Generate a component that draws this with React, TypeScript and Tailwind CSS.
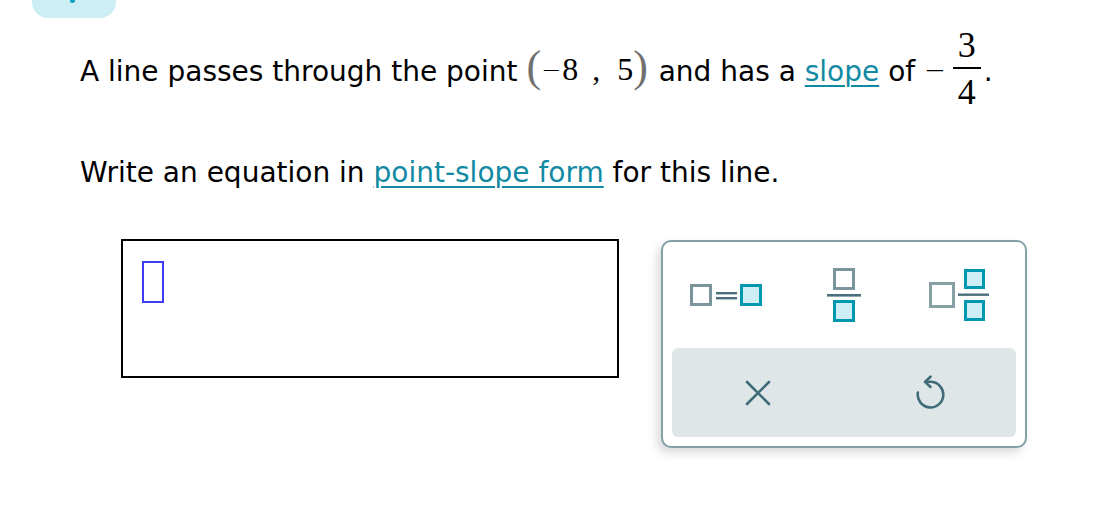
import React from "react";

const sans = "font-['DejaVu_Sans','Verdana',sans-serif]";
const serif = "font-['Liberation_Serif','Times_New_Roman',serif]";

function EqualsIcon() {
  return (
    <svg width="72" height="22" viewBox="0 0 72 22">
      <rect x="1.5" y="1.5" width="19" height="19" fill="#fff" stroke="#7a959b" strokeWidth="3" />
      <rect x="26" y="8" width="21" height="2.4" fill="#4a6e7a" />
      <rect x="26" y="13" width="21" height="2.4" fill="#4a6e7a" />
      <rect x="51.5" y="1.5" width="19" height="19" fill="#cdeef4" stroke="#0098b1" strokeWidth="3" />
    </svg>
  );
}

function FractionIcon() {
  return (
    <svg width="34" height="55" viewBox="0 0 34 55">
      <rect x="7.5" y="1.5" width="19" height="19" fill="#fff" stroke="#7a959b" strokeWidth="3" />
      <rect x="0" y="26" width="34" height="2.6" fill="#4a6e7a" />
      <rect x="7.5" y="33.5" width="19" height="19" fill="#cdeef4" stroke="#0098b1" strokeWidth="3" />
    </svg>
  );
}

function MixedIcon() {
  return (
    <svg width="60" height="52" viewBox="0 0 60 52">
      <rect x="1.5" y="14.5" width="23" height="23" fill="#fff" stroke="#87a0a6" strokeWidth="3" />
      <rect x="29" y="24.5" width="31" height="2.4" fill="#4a6e7a" />
      <rect x="36.5" y="1.5" width="18" height="17" fill="#cdeef4" stroke="#0098b1" strokeWidth="3" />
      <rect x="36.5" y="32.5" width="18" height="18" fill="#cdeef4" stroke="#0098b1" strokeWidth="3" />
    </svg>
  );
}

function CloseIcon() {
  return (
    <svg width="26" height="26" viewBox="0 0 26 26" fill="none" stroke="#3f6b78" strokeWidth="2.6" strokeLinecap="round">
      <path d="M2 2 L24 24 M24 2 L2 24" />
    </svg>
  );
}

function UndoIcon() {
  return (
    <svg width="29" height="35" viewBox="3.5 1.5 17 20.5" fill="none" stroke="#3f6b78" strokeWidth="1.5" strokeLinecap="round" strokeLinejoin="round">
      <path d="M12 2.5 L8.8 5.5 L12 8.5" />
      <path d="M9 5.5 H12 A7.5 7.5 0 1 1 4.6 11.8" />
    </svg>
  );
}

export default function App() {
  return (
    <div className={`${sans} w-[1101px] h-[516px] bg-white text-black overflow-hidden`}>
      <div className="ml-[32px] w-[84px] h-[18px] rounded-b-[16px] bg-[#cdeef4] flex justify-center">
        <div className="w-[5px] h-[3px] rounded-b-full bg-[#0aa0c0] -ml-[3px]" />
      </div>

      <div className="pl-[80px]">
        <div className="flex items-center h-[96px] mt-[6px] text-[28px] leading-[28px]">
          <span className="whitespace-pre">A line passes through the point </span>
          <span className="flex items-center mb-[6px] mr-[2px]">
            <span className={`${serif} text-[44px] leading-[44px] text-[#707070] mb-[5px]`}>(</span>
            <span className="text-[24px] leading-[24px] font-light mt-[2px]">−</span>
            <span className={`${serif} text-[32px] leading-[32px] ml-[1px]`}>8</span>
            <span className={`${serif} text-[32px] leading-[32px] ml-[14px]`}>,</span>
            <span className={`${serif} text-[32px] leading-[32px] ml-[17px]`}>5</span>
            <span className={`${serif} text-[44px] leading-[44px] text-[#707070] mb-[5px]`}>)</span>
          </span>
          <span className="whitespace-pre"> and has a </span>
          <span className="text-[#138aa3] underline decoration-[1.5px] underline-offset-[4px]">slope</span>
          <span className="whitespace-pre"> of </span>
          <span className="text-[26px] leading-[26px] font-light mb-[4px]">−</span>
          <span className={`${serif} flex flex-col items-center w-[28px] ml-[7px] mb-[7px]`}>
            <span className="text-[36px] leading-[36px] mb-[4px]">3</span>
            <span className="w-[28px] h-[2px] bg-black" />
            <span className="text-[36px] leading-[36px] mt-[5px]">4</span>
          </span>
          <span className="ml-[3px]">.</span>
        </div>

        <div className="mt-[39px] text-[28px] leading-[28px] whitespace-pre">
          Write an equation in{" "}
          <span className="text-[#138aa3] underline decoration-[1.5px] underline-offset-[4px]">point-slope form</span>{" "}
          for this line.
        </div>

        <div className="flex items-start mt-[52px]">
          <div className="ml-[41px] w-[498px] h-[139px] border-2 border-black pl-[19px] pt-[20px]">
            <div className="w-[22px] h-[42px] border-2 border-[#3c3cf2]" />
          </div>

          <div className="ml-[42px] mt-[1px] w-[366px] h-[208px] border-2 border-[#84a1a8] rounded-[10px] bg-white shadow-[-4px_5px_10px_rgba(0,0,0,0.14)] flex flex-col px-[9px] pb-[9px]">
            <div className="flex-1 grid grid-cols-3 items-center justify-items-center">
              <div className="-ml-[6px]">
                <EqualsIcon />
              </div>
              <FractionIcon />
              <MixedIcon />
            </div>
            <div className="h-[89px] rounded-[6px] bg-[#dfe6e8] grid grid-cols-2 items-center justify-items-center">
              <CloseIcon />
              <UndoIcon />
            </div>
          </div>
        </div>
      </div>
    </div>
  );
}
